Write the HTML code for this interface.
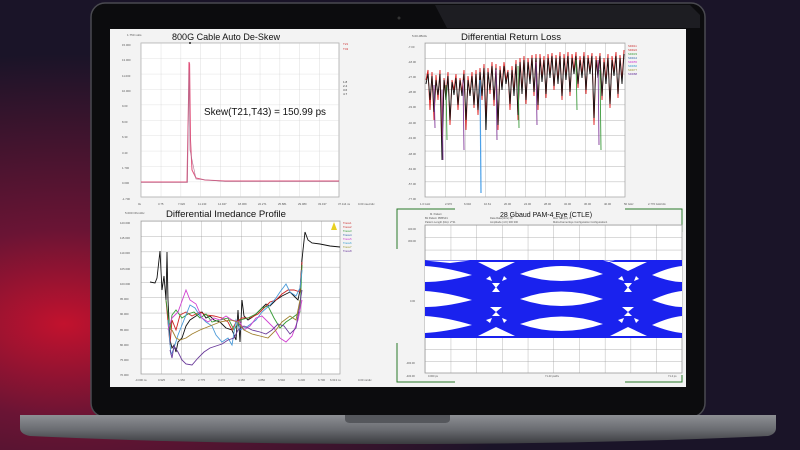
<!DOCTYPE html>
<html><head><meta charset="utf-8"><style>
html,body{margin:0;padding:0;width:800px;height:450px;overflow:hidden;background:#1a1226}
svg{display:block}
text{font-family:"Liberation Sans",sans-serif}
</style></head><body>
<svg width="800" height="450" viewBox="0 0 800 450" xmlns="http://www.w3.org/2000/svg">
<defs>
<radialGradient id="bg" cx="0.08" cy="0.72" r="0.6">
<stop offset="0" stop-color="#c2122e"/><stop offset="0.35" stop-color="#6a1434"/><stop offset="1" stop-color="#1a1428"/>
</radialGradient>
<linearGradient id="base" x1="0" y1="0" x2="0" y2="1">
<stop offset="0" stop-color="#8d8f94"/><stop offset="0.5" stop-color="#6a6c71"/><stop offset="1" stop-color="#3a3b3f"/>
</linearGradient>
<pattern id="g1" x="141" y="43" width="19.8" height="15.4" patternUnits="userSpaceOnUse"><path d="M0 0H19.8M0 0V15.4" stroke="#c8c8c8" stroke-width="0.6" fill="none"/></pattern>
<pattern id="g2" x="425" y="43" width="20" height="15.4" patternUnits="userSpaceOnUse"><path d="M0 0H20M0 0V15.4" stroke="#9a9a9a" stroke-width="0.7" fill="none"/></pattern>
<pattern id="g3" x="141" y="221" width="20" height="15.3" patternUnits="userSpaceOnUse"><path d="M0 0H20M0 0V15.3" stroke="#9a9a9a" stroke-width="0.7" fill="none"/></pattern>
<pattern id="g4" x="425" y="225" width="25.7" height="12.4" patternUnits="userSpaceOnUse"><path d="M0 0H25.7M0 0V12.4" stroke="#9a9a9a" stroke-width="0.7" fill="none"/></pattern>
</defs>
<rect width="800" height="450" fill="url(#bg)"/>
<rect x="91" y="3" width="614" height="414" rx="14" fill="#0c0c0e" stroke="#4a4a50" stroke-width="1.5"/>
<polygon points="435,5 690,5 700,15 700,28 447,28" fill="#1d1d22"/>
<circle cx="399" cy="18" r="1.5" fill="#333"/>
<rect x="110" y="29" width="576" height="358" fill="#f3f3f3"/>
<path d="M20 415 H776 V428 Q776 434 768 436 Q600 444 398 444 Q200 444 30 436 Q20 434 20 428Z" fill="url(#base)"/>
<path d="M345 415 H450 V419 Q450 423 444 423 H351 Q345 423 345 419Z" fill="#55575c"/>

<!-- TL -->
<rect x="141" y="43" width="198" height="154" fill="#fff" stroke="#aaa" stroke-width="0.8"/>
<rect x="141" y="43" width="198" height="154" fill="url(#g1)"/>
<text x="226" y="40" font-size="9.5" text-anchor="middle" fill="#111" textLength="108" lengthAdjust="spacingAndGlyphs">800G Cable Auto De-Skew</text>
<text x="127" y="36" font-size="3" fill="#555">1.750 volts</text>
<g font-size="2.8" fill="#555">
<text x="122" y="46">15.000</text><text x="122" y="61">13.000</text><text x="122" y="77">11.000</text><text x="122" y="92">10.000</text><text x="122" y="107">9.00</text><text x="122" y="123">8.00</text><text x="122" y="138">6.30</text><text x="122" y="154">3.40</text><text x="122" y="169">1.700</text><text x="122" y="184">0.000</text><text x="122" y="200">-1.700</text>
<text x="138" y="205">0s</text><text x="158" y="205">3.75</text><text x="178" y="205">7.620</text><text x="198" y="205">11.130</text><text x="218" y="205">14.947</text><text x="238" y="205">18.069</text><text x="258" y="205">22.271</text><text x="278" y="205">25.881</text><text x="298" y="205">29.080</text><text x="318" y="205">33.437</text><text x="338" y="205">37.114 ns</text><text x="358" y="205">0.00 nsec/div</text>
</g>
<g font-size="3" fill="#c33"><text x="343" y="45">T21</text><text x="343" y="50">T43</text></g>
<g font-size="3" fill="#333"><text x="343" y="83">1.8</text><text x="343" y="87">2.4</text><text x="343" y="91">3.6</text><text x="343" y="95">4.7</text></g>
<text x="204" y="115" font-size="10.5" fill="#111" textLength="122" lengthAdjust="spacingAndGlyphs">Skew(T21,T43)  = 150.99 ps</text>
<path d="M141 182 H187 L188.5 100 L189 62 L189.6 64 L190.5 140 L192 170 L196 178 L205 180 L225 181 H339" fill="none" stroke="#e0507a" stroke-width="1"/>
<path d="M141 182.5 H187.5 L189 70 L190 150 L196 179 L225 181.5 H339" fill="none" stroke="#b07090" stroke-width="0.6"/>
<circle cx="190" cy="43" r="1" fill="#222"/>

<!-- TR -->
<rect x="425" y="43" width="200" height="154" fill="#fff" stroke="#aaa" stroke-width="0.8"/>
<rect x="425" y="43" width="200" height="154" fill="url(#g2)"/>
<text x="511" y="40" font-size="9.5" text-anchor="middle" fill="#111" textLength="100" lengthAdjust="spacingAndGlyphs">Differential Return Loss</text>
<text x="412" y="37" font-size="3" fill="#555">5.00 dB/div</text>
<g font-size="2.8" fill="#555">
<text x="408" y="48">-7.00</text><text x="408" y="63">-18.00</text><text x="408" y="78">-27.00</text><text x="408" y="93">-28.00</text><text x="408" y="108">-33.00</text><text x="408" y="124">-40.00</text><text x="408" y="139">-43.00</text><text x="408" y="155">-48.00</text><text x="408" y="170">-63.00</text><text x="408" y="185">-57.00</text><text x="408" y="200">-77.00</text>
<text x="420" y="205">1.0 GHz</text><text x="445" y="205">2.970</text><text x="464" y="205">6.640</text><text x="484" y="205">10.61</text><text x="504" y="205">20.00</text><text x="524" y="205">24.00</text><text x="544" y="205">28.00</text><text x="564" y="205">32.00</text><text x="584" y="205">36.00</text><text x="604" y="205">40.00</text><text x="624" y="205">50 GHz</text><text x="648" y="205">2.770 GHz/div</text>
</g>
<g font-size="2.8"><text x="628" y="47" fill="#c33">SDD11</text><text x="628" y="51" fill="#c33">SDD22</text><text x="628" y="55" fill="#393">SDD33</text><text x="628" y="59" fill="#36a">SDD44</text><text x="628" y="63" fill="#c3c">SDD55</text><text x="628" y="67" fill="#39c">SDD66</text><text x="628" y="71" fill="#993">SDD77</text><text x="628" y="75" fill="#639">SDD88</text></g>
<g fill="none" stroke-width="0.9">
<path d="M426 80 L428 70 430 110 432 72 434 120 436 75 438 100 440 70 442 140 444 78 446 95 448 72 450 125 452 80 454 90 456 74 458 110 460 78 462 92 464 70 466 130 468 76 470 95 472 72 474 108 476 70 478 115 480 68 482 100 484 64 486 118 488 68 490 94 492 62 494 106 496 64 498 130 500 66 502 88 504 62 506 80 508 70 510 110 512 66 514 92 516 60 518 120 520 58 522 90 524 56 526 104 528 58 530 80 532 55 534 96 536 54 538 110 540 54 542 78 544 56 546 98 548 54 550 74 552 53 554 90 556 55 558 80 560 52 562 100 564 54 566 76 568 52 570 96 572 54 574 70 576 52 578 88 580 56 582 74 584 52 586 94 588 55 590 70 592 53 594 125 596 56 598 75 600 53 602 100 604 58 606 80 608 54 610 108 612 56 614 72 616 52 618 98 620 55 622 80 624 50" stroke="#d22"/>
<path d="M426 84 L428 74 430 100 432 76 434 112 436 80 438 95 440 74 442 160 444 80 446 100 448 76 450 120 452 82 454 95 456 78 458 105 460 80 462 96 464 74 466 120 468 80 470 96 472 76 474 105 476 74 478 110 480 72 482 96 484 68 486 130 488 72 490 90 492 66 494 100 496 68 498 125 500 70 502 90 504 66 506 84 508 72 510 104 512 70 514 96 516 64 518 115 520 62 522 94 524 60 526 100 528 62 530 84 532 58 534 92 536 58 538 105 540 58 542 82 544 60 546 94 548 58 550 78 552 56 554 86 556 58 558 84 560 56 562 96 564 58 566 80 568 56 570 92 572 58 574 74 576 56 578 84 580 60 582 78 584 56 586 90 588 58 590 74 592 56 594 118 596 60 598 78 600 56 602 96 604 62 606 84 608 58 610 104 612 60 614 76 616 56 618 94 620 58 622 84 624 54" stroke="#111"/>
<path d="M434 85 L435 128 M442 90 L443 160 M463 80 L464 150 M496 70 L497 140 M536 62 L537 125 M598 60 L599 145" stroke="#823a9a"/>
<path d="M480 80 L481 193" stroke="#4aa0e8" stroke-width="1.2"/>
<path d="M446 85 L447 140 M518 66 L519 128 M576 60 L577 110 M600 70 L601 150" stroke="#3a9a3a"/>
</g>

<!-- BL -->
<rect x="141" y="221" width="199" height="153" fill="#fff" stroke="#aaa" stroke-width="0.8"/>
<rect x="141" y="221" width="199" height="153" fill="url(#g3)"/>
<text x="226" y="217" font-size="9.5" text-anchor="middle" fill="#111" textLength="120" lengthAdjust="spacingAndGlyphs">Differential Imedance Profile</text>
<text x="125" y="214" font-size="3" fill="#555">5.000 Ohm/div</text>
<g font-size="2.8" fill="#555">
<text x="120" y="224">120.000</text><text x="120" y="239">115.000</text><text x="120" y="254">110.000</text><text x="120" y="270">105.000</text><text x="120" y="285">100.000</text><text x="120" y="300">95.000</text><text x="120" y="315">90.000</text><text x="120" y="331">85.000</text><text x="120" y="346">80.000</text><text x="120" y="361">75.000</text><text x="120" y="376">70.000</text>
<text x="135" y="381">-0.000 ns</text><text x="158" y="381">0.925</text><text x="178" y="381">1.950</text><text x="198" y="381">2.775</text><text x="218" y="381">3.470</text><text x="238" y="381">4.160</text><text x="258" y="381">4.850</text><text x="278" y="381">5.540</text><text x="298" y="381">6.230</text><text x="318" y="381">6.700</text><text x="330" y="381">6.613 ns</text><text x="358" y="381">0.00 ns/div</text>
</g>
<polygon points="334,222 337,230 331,230" fill="#e8d020"/>
<g font-size="2.8"><text x="343" y="224" fill="#c33">Trace1</text><text x="343" y="228" fill="#c33">Trace2</text><text x="343" y="232" fill="#393">Trace3</text><text x="343" y="236" fill="#36a">Trace4</text><text x="343" y="240" fill="#c3c">Trace5</text><text x="343" y="244" fill="#39c">Trace6</text><text x="343" y="248" fill="#993">Trace7</text><text x="343" y="252" fill="#639">Trace8</text></g>
<g fill="none" stroke-width="0.9">
<path d="M150 282 L155 283 157 278 160 251 162 290 164 276 166 300 167 252 168 300 170 340 172 348 174 345 176 352 178 342 182 338 186 326 190 320 196 316 202 312 206 318 210 316 214 320 220 322 226 328 232 330 236 340 238 310 240 342 242 300 244 316 248 320 254 316 260 310 266 304 270 306 276 300 282 296 286 294 290 292 294 296 298 300 300 290 302 260 303 250 305 232 308 240 312 243 320 244 330 246 340 247" stroke="#111"/>
<path d="M166 300 L170 345 172 320 176 330 180 315 186 312 192 316 200 312 206 315 214 316 222 318 228 322 232 330 236 322 242 318 250 318 258 314 264 308 270 302 276 300 282 294 288 290 294 290 300 292 302 262" stroke="#c22"/>
<path d="M166 300 L170 330 172 315 176 310 182 318 188 314 194 312 200 318 206 314 212 322 220 320 228 318 234 330 240 320 248 318 256 314 262 308 268 306 274 318 280 328 286 322 292 318 300 312 302 265" stroke="#393"/>
<path d="M168 320 L171 355 174 348 178 335 184 320 190 305 195 308 200 316 206 322 212 326 216 335 222 342 228 338 232 345 236 320 240 330 248 326 256 320 262 312 270 305 276 298 280 292 286 284 290 292 296 296 300 288 302 270" stroke="#4a9ad8"/>
<path d="M168 330 L172 318 178 312 186 290 190 300 196 304 202 318 208 322 214 318 220 320 226 316 232 320 240 322 244 330 250 326 256 318 262 316 268 322 274 328 280 338 286 342 292 336 298 320 302 300" stroke="#d040d0"/>
<path d="M170 350 L172 358 174 346 178 352 182 360 186 364 192 365 198 358 204 352 210 348 216 346 222 344 228 340 234 338 238 330 244 326 252 330 260 332 266 334 272 330 278 324 284 326 290 334 296 328 302 290" stroke="#6a3a9a"/>
<path d="M172 330 L176 338 180 340 186 338 192 334 200 330 210 326 220 322 230 320 238 322 244 330 252 334 260 336 268 338 276 330 282 322 290 316 296 320 300 300" stroke="#a08030"/>
</g>

<!-- BR eye -->
<g stroke="#2a7a2a" stroke-width="1" fill="none">
<path d="M397 249 V209 H455"/><path d="M625 209 H682 V232"/><path d="M397 343 V382 H455"/><path d="M625 382 H682 V375"/>
</g>
<rect x="425" y="225" width="257" height="148" fill="#fff" stroke="#999" stroke-width="0.8"/>
<rect x="425" y="225" width="257" height="148" fill="url(#g4)"/>
<text x="546" y="217" font-size="7" text-anchor="middle" fill="#111">28 Gbaud PAM-4 Eye (CTLE)</text>
<g font-size="2.6" fill="#555"><text x="430" y="215">M. Pattern</text><text x="425" y="219">Bit Pattern   PRBS31</text><text x="425" y="223">Pattern Length (bits): 2^31</text><text x="490" y="219">Data Rate(Gb/s)  28</text><text x="490" y="223">Amplitude (mV)  300  300</text><text x="553" y="219">Max Tran(ps)   4</text><text x="553" y="223">Multi-channel Eye Configuration   Configuration1</text>
<text x="408" y="230">400.00</text><text x="408" y="242">300.00</text><text x="410" y="302">0.00</text><text x="406" y="364">-300.00</text><text x="406" y="377">-400.00</text><text x="428" y="377">0.000 ps</text><text x="545" y="377">71.43 ps/div</text><text x="668" y="377">71.4 ps</text></g>
<rect x="425" y="260" width="257" height="78" fill="#1a22ee"/>
<g fill="#fff">
<path d="M425 266 Q445 267 472 275 Q445 282 425 282Z"/>
<path d="M425 291 Q445 292 472 300 Q445 307 425 307Z"/>
<path d="M425 316 Q445 317 472 325 Q445 332 425 333Z"/>
<path d="M520 274 Q561 258 603 274 Q561 288 520 274Z"/>
<path d="M520 299 Q561 284 603 299 Q561 313 520 299Z"/>
<path d="M520 324 Q561 309 603 324 Q561 338 520 324Z"/>
<path d="M682 266 Q670 267 652 275 Q670 282 682 282Z"/>
<path d="M682 291 Q670 292 652 300 Q670 307 682 307Z"/>
<path d="M682 316 Q670 317 652 325 Q670 332 682 333Z"/>
<g id="cx">
<path d="M478 262 L515 262 496 271Z"/><path d="M478 336 L515 336 496 327Z"/>
<path d="M492 283 L500 283 496 288Z"/><path d="M492 292 L496 287 500 292Z"/>
<path d="M490 307 L502 307 496 312Z"/><path d="M492 316 L496 312 500 316Z"/>
<path d="M486 279 L490 276 492 281Z"/><path d="M502 281 L504 276 507 279Z"/>
<path d="M486 320 L490 323 492 318Z"/><path d="M502 318 L504 323 507 320Z"/>
</g>
<use href="#cx" transform="translate(132 0)"/>
<path d="M425 260.5 L470 260.5 450 263Z"/><path d="M603 260.5 L615 260.5 609 262Z"/>
</g>
</svg>
</body></html>
